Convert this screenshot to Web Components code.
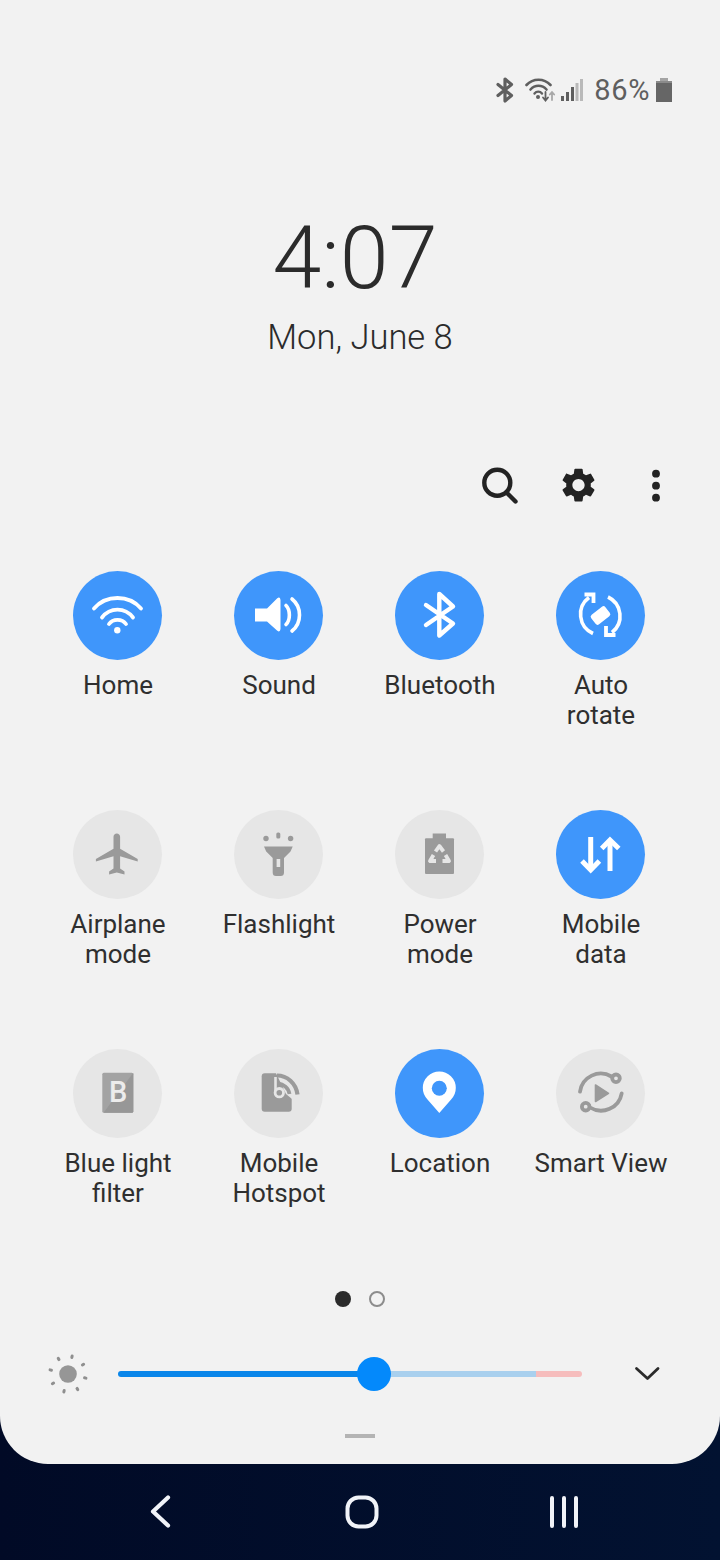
<!DOCTYPE html>
<html>
<head>
<meta charset="utf-8">
<title>Quick panel</title>
<style>
  html, body { margin: 0; padding: 0; }
  body {
    width: 720px;
    height: 1560px;
    overflow: hidden;
    background: linear-gradient(90deg, #010a26, #021231);
    font-family: Roboto, "Liberation Sans", sans-serif;
  }
</style>
</head>
<body>
<quick-panel>
  <status-bar></status-bar>
  <clock-block time="4:07" date="Mon, June 8"></clock-block>
  <panel-toolbar></panel-toolbar>
  <tile-grid>
    <qs-tile on>
      <svg slot="icon" viewBox="0 0 89 89" fill="none" stroke="currentColor" stroke-linecap="round" stroke-width="3.8">
        <path d="M21 37.5 C33 23.5 56 23.5 68 37.5"/>
        <path d="M29 46.5 C37 36 52 36 60 46.5"/>
        <path d="M36 53 C40 47.5 49 47.5 53 53"/>
        <circle cx="44.3" cy="59.2" r="3.2" fill="currentColor" stroke="none"/>
      </svg>
      Home
    </qs-tile>
    <qs-tile on>
      <svg slot="icon" viewBox="0 0 89 89" fill="none" stroke="currentColor" stroke-linecap="round" stroke-width="3.6">
        <path d="M21 37.5 H33 L43 27.5 Q46 25 46.5 29 V58 Q46 62 43 59.5 L33 50.5 H21 Z" fill="currentColor" stroke="none"/>
        <path d="M52 34.5 C56.5 39 56.5 49 52 53.5"/>
        <path d="M58 28 C68 36 68 52 58 60"/>
      </svg>
      Sound
    </qs-tile>
    <qs-tile on>
      <svg slot="icon" viewBox="0 0 89 89" fill="none" stroke="currentColor" stroke-linecap="round" stroke-linejoin="round" stroke-width="4.4">
        <path d="M31 34 L58 52.5 L44.3 64.5 V23 L58 35.5 L31 54"/>
      </svg>
      Bluetooth
    </qs-tile>
    <qs-tile on>
      <svg slot="icon" viewBox="0 0 89 89" fill="none" stroke="currentColor" stroke-width="3.6">
        <path d="M37 62.5 A21 21 0 0 1 33 26.5"/>
        <path d="M52 26 A21 21 0 0 1 56 61.5"/>
        <path d="M28.5 23.5 H37.5 V32" stroke-width="3.8"/>
        <path d="M59.5 64 H50 V55" stroke-width="3.8"/>
        <rect x="35.5" y="38.5" width="18" height="12" rx="2.5" transform="rotate(-38 44.5 44.5)" fill="currentColor" stroke="none"/>
      </svg>
      Auto<br>rotate
    </qs-tile>

    <qs-tile>
      <svg slot="icon" viewBox="0 0 89 89" fill="currentColor">
        <path transform="translate(18.5 19.5) scale(2.2 2.05)" d="M21 15.6v-1.2l-8-5V3.5c0-.83-.67-1.5-1.5-1.5S10 2.67 10 3.5v5.9l-8 5v1.2l8-2.5V19l-2 1.5V22l3.5-1 3.5 1v-1.5L13 19v-5.9z"/>
      </svg>
      Airplane<br>mode
    </qs-tile>
    <qs-tile>
      <svg slot="icon" viewBox="0 0 89 89" fill="currentColor">
        <path d="M30 36.5 H58.7 L56.5 41.5 L50 48 V62.5 Q50 66 46.5 66 H42 Q38.7 66 38.7 62.5 V48 L32.2 41.5 Z"/>
        <rect x="42.6" y="49" width="3.6" height="8" fill="#e6e6e6"/>
        <circle cx="32" cy="28.5" r="2.7"/>
        <rect x="42.3" y="22.5" width="4" height="6" rx="1.6"/>
        <circle cx="56.6" cy="28.5" r="2.7"/>
      </svg>
      Flashlight
    </qs-tile>
    <qs-tile>
      <svg slot="icon" viewBox="0 0 89 89" fill="currentColor">
        <rect x="37.7" y="23.5" width="13.3" height="6"/>
        <rect x="30" y="28.3" width="29" height="35.7" rx="1"/>
        <g fill="none" stroke="#e6e6e6" stroke-width="3.8" stroke-linejoin="round">
          <path d="M40.5 41.5 L44.4 36 L48.5 41.5"/>
          <path d="M38.5 45 L35 51 H41"/>
          <path d="M50.5 45 L54 51 H47.5"/>
        </g>
      </svg>
      Power<br>mode
    </qs-tile>
    <qs-tile on>
      <svg slot="icon" viewBox="0 0 89 89" fill="none" stroke="currentColor" stroke-width="5" stroke-linejoin="miter">
        <path d="M34.7 27 V58"/>
        <path d="M26 51 L34.7 60 L43.4 51"/>
        <path d="M54 31 V61"/>
        <path d="M45.7 38.5 L54 30 L62.8 38.5"/>
      </svg>
      Mobile<br>data
    </qs-tile>

    <qs-tile>
      <svg slot="icon" viewBox="0 0 89 89" fill="currentColor">
        <rect x="29.3" y="23.7" width="31" height="40" rx="1.5" fill="#a3a3a3"/>
        <path d="M60.3 23.7 V62.2 Q60.3 63.7 58.8 63.7 H30.5 Z" fill="#979797"/>
        <text x="45.2" y="53" text-anchor="middle" font-family="Roboto, sans-serif" font-weight="500" font-size="29" fill="#ececec">B</text>
      </svg>
      Blue light<br>filter
    </qs-tile>
    <qs-tile>
      <svg slot="icon" viewBox="0 0 89 89" fill="none">
        <rect x="27.7" y="24.3" width="30" height="38.4" rx="3" fill="currentColor"/>
        <path d="M40 20 H70 V50 H58 L52 45 Z" fill="#e6e6e6"/>
        <path d="M43 26.5 C53 26.5 62 34 63.5 45.5" stroke="currentColor" stroke-width="4.2"/>
        <path d="M44 34.5 C49.5 35 54.5 39 55.5 45" stroke="currentColor" stroke-width="3.8"/>
        <path d="M41.5 28 V43" stroke="#e6e6e6" stroke-width="2.6"/>
        <circle cx="45.3" cy="43.7" r="4.2" fill="currentColor" stroke="#e6e6e6" stroke-width="2.8"/>
      </svg>
      Mobile<br>Hotspot
    </qs-tile>
    <qs-tile on>
      <svg slot="icon" viewBox="0 0 89 89" fill="currentColor">
        <path d="M44.3 64 L32.5 50.5 A16.5 16.5 0 1 1 56.1 50.5 Z"/>
        <circle cx="44.3" cy="39.3" r="7.5" style="fill:var(--tile-bg)"/>
      </svg>
      Location
    </qs-tile>
    <qs-tile>
      <svg slot="icon" viewBox="0 0 89 89" fill="none" stroke="currentColor" stroke-width="3.8" stroke-linecap="round" stroke-linejoin="round">
        <path d="M24 42.7 A21 21 0 0 1 55.5 27.5"/>
        <circle cx="60" cy="29.3" r="3.8"/>
        <path d="M65.7 44.3 A21 21 0 0 1 34 58.5"/>
        <circle cx="29.7" cy="57.7" r="3.8"/>
        <path d="M39.5 36 V52.5 L52.5 44.3 Z" fill="currentColor" stroke-width="1.6"/>
      </svg>
      Smart View
    </qs-tile>
  </tile-grid>
  <page-dots></page-dots>
  <brightness-bar></brightness-bar>
  <panel-handle></panel-handle>
</quick-panel>
<nav-bar></nav-bar>

<script>
// quick panel pieces

class QuickPanel extends HTMLElement {
  constructor() {
    super();
    this.attachShadow({ mode: 'open' });
    this.shadowRoot.innerHTML = `
      <style>
        :host {
          display: flex;
          flex-direction: column;
          height: 1464px;
          background: #f2f2f2;
          border-radius: 0 0 48px 48px;
          color: #2b2b2b;
        }
      </style>
      <slot></slot>
    `;
  }
}

class StatusBar extends HTMLElement {
  constructor() {
    super();
    this.attachShadow({ mode: 'open' });
    this.shadowRoot.innerHTML = `
      <style>
        :host {
          display: flex;
          justify-content: flex-end;
          align-items: center;
          height: 32px;
          margin-top: 74px;
          padding-right: 48px;
          color: #5f5f5f;
        }
        svg { display: block; flex: none; }
        .pct {
          font-size: 29px;
          font-weight: 400;
          letter-spacing: 0.6px;
          line-height: 32px;
          margin: 0 6px 0 11px;
        }
      </style>
      <svg width="18" height="26" viewBox="0 0 18 26" fill="none" stroke="currentColor" stroke-width="3.2" stroke-linejoin="round" stroke-linecap="round">
        <path d="M2 7.5 L15.5 18.5 L9 24 V2 L15.5 7.5 L2 18.5"/>
      </svg>
      <svg style="margin-left:11px" width="31" height="26" viewBox="0 0 31 26" fill="none" stroke="currentColor" stroke-linecap="round">
        <path d="M1.5 8 C8 1 19 1 25.5 8" stroke-width="2.6"/>
        <path d="M5.5 12.5 C10 7.5 17 7.5 21.5 12.5" stroke-width="2.6"/>
        <path d="M9.5 16.5 C11.5 14 15 14 17 16.5" stroke-width="2.4"/>
        <circle cx="13" cy="20" r="2" fill="currentColor" stroke="none"/>
        <path d="M20.5 15 V23 M18 20.5 L20.5 23.5 L23 20.5" stroke-width="1.8"/>
        <path d="M27 23 V15 M24.8 17.5 L27 15 L29.2 17.5" stroke="#a8a8a8" stroke-width="1.8"/>
      </svg>
      <svg style="margin-left:5px" width="22" height="24" viewBox="0 0 22 24">
        <rect x="0" y="18" width="3" height="5" fill="#5f5f5f"/>
        <rect x="5" y="14" width="3" height="9" fill="#5f5f5f"/>
        <rect x="10" y="9" width="3" height="14" fill="#5f5f5f"/>
        <rect x="14.5" y="5" width="3" height="18" fill="#b9b9b9"/>
        <rect x="19" y="1" width="3" height="22" fill="#b9b9b9"/>
      </svg>
      <span class="pct">86%</span>
      <svg width="16" height="24" viewBox="0 0 16 24">
        <rect x="4" y="0" width="8" height="4" fill="#a4a4a4"/>
        <rect x="0" y="3" width="16" height="3" fill="#8a8a8a"/>
        <rect x="0" y="5" width="16" height="19" fill="#666"/>
      </svg>
    `;
  }
}

class ClockBlock extends HTMLElement {
  constructor() {
    super();
    this.attachShadow({ mode: 'open' });
  }

  connectedCallback() {
    this.shadowRoot.innerHTML = `
      <style>
        :host {
          display: flex;
          flex-direction: column;
          align-items: center;
          margin-top: 102px;
          color: #2b2b2b;
          font-weight: 300;
        }
        .time {
          height: 100px;
          margin-right: 10px;
          font-size: 88px;
          line-height: 100px;
        }
        .date {
          height: 40px;
          margin-top: 9px;
          font-size: 34.5px;
          line-height: 40px;
        }
      </style>
      <div class="time">${this.getAttribute('time')}</div>
      <div class="date">${this.getAttribute('date')}</div>
    `;
  }
}

class PanelToolbar extends HTMLElement {
  constructor() {
    super();
    this.attachShadow({ mode: 'open' });
    this.shadowRoot.innerHTML = `
      <style>
        :host {
          display: flex;
          justify-content: flex-end;
          align-items: center;
          height: 44px;
          margin-top: 106px;
          padding-right: 54px;
          color: #232323;
        }
        svg { display: block; flex: none; }
      </style>
      <svg width="44" height="44" viewBox="0 0 44 44" fill="none" stroke="currentColor" stroke-width="4.4" stroke-linecap="round">
        <circle cx="20.3" cy="19.7" r="13"/>
        <path d="M30 30 L38.5 38.5"/>
      </svg>
      <svg style="margin-left:37px" width="41" height="44" viewBox="0 0 24 25.75" fill="currentColor">
        <path transform="translate(0 .9)" d="M19.14 12.94c.04-.3.06-.61.06-.94 0-.32-.02-.64-.07-.94l2.03-1.58a.49.49 0 0 0 .12-.61l-1.92-3.32a.488.488 0 0 0-.59-.22l-2.39.96c-.5-.38-1.03-.7-1.62-.94l-.36-2.54a.484.484 0 0 0-.48-.41h-3.84c-.24 0-.43.17-.47.41l-.36 2.54c-.59.24-1.13.57-1.62.94l-2.39-.96c-.22-.08-.47 0-.59.22L2.74 8.87c-.12.21-.08.47.12.61l2.03 1.58c-.05.3-.09.63-.09.94s.02.64.07.94l-2.03 1.58a.49.49 0 0 0-.12.61l1.92 3.32c.12.22.37.29.59.22l2.39-.96c.5.38 1.03.7 1.62.94l.36 2.54c.05.24.24.41.48.41h3.84c.24 0 .44-.17.47-.41l.36-2.54c.59-.24 1.13-.56 1.62-.94l2.39.96c.22.08.47 0 .59-.22l1.92-3.32c.12-.22.07-.47-.12-.61l-2.01-1.58zM12 15.6c-1.98 0-3.6-1.62-3.6-3.6s1.62-3.6 3.6-3.6 3.6 1.62 3.6 3.6-1.62 3.6-3.6 3.6z"/>
      </svg>
      <svg style="margin-left:47px" width="20" height="44" viewBox="0 0 20 44" fill="currentColor">
        <circle cx="10" cy="10.7" r="3.9"/>
        <circle cx="10" cy="22.7" r="3.9"/>
        <circle cx="10" cy="34.7" r="3.9"/>
      </svg>
    `;
  }
}

class TileGrid extends HTMLElement {
  constructor() {
    super();
    this.attachShadow({ mode: 'open' });
    this.shadowRoot.innerHTML = `
      <style>
        :host {
          display: grid;
          grid-template-columns: repeat(4, 161px);
          grid-auto-rows: 239px;
          margin-top: 64px;
          padding-left: 37px;
        }
      </style>
      <slot></slot>
    `;
  }
}

class QsTile extends HTMLElement {
  constructor() {
    super();
    this.attachShadow({ mode: 'open' });
    this.shadowRoot.innerHTML = `
      <style>
        :host {
          --tile-bg: #e6e6e6;
          --tile-fg: #9a9a9a;
          display: flex;
          flex-direction: column;
          align-items: center;
          font-size: 26px;
          line-height: 30px;
          color: #2f2f2f;
          text-align: center;
        }
        :host([on]) {
          --tile-bg: #3f96fb;
          --tile-fg: #fff;
        }
        .circle {
          width: 89px;
          height: 89px;
          flex: none;
          border-radius: 50%;
          background: var(--tile-bg);
          color: var(--tile-fg);
        }
        ::slotted(svg) {
          display: block;
          width: 89px;
          height: 89px;
        }
        .label {
          margin-top: 10px;
          margin-left: 1px;
          white-space: nowrap;
        }
      </style>
      <div class="circle"><slot name="icon"></slot></div>
      <div class="label"><slot></slot></div>
    `;
  }
}

class PageDots extends HTMLElement {
  constructor() {
    super();
    this.attachShadow({ mode: 'open' });
    this.shadowRoot.innerHTML = `
      <style>
        :host {
          display: flex;
          justify-content: center;
          align-items: center;
          gap: 18px;
          height: 20px;
          margin-top: 1px;
        }
        .dot {
          box-sizing: border-box;
          width: 16px;
          height: 16px;
          border-radius: 50%;
          background: #2b2b2b;
        }
        .dot.off {
          background: none;
          border: 2.5px solid #8c8c8c;
        }
      </style>
      <div class="dot"></div>
      <div class="dot off"></div>
    `;
  }
}

class BrightnessBar extends HTMLElement {
  constructor() {
    super();
    this.attachShadow({ mode: 'open' });
    this.shadowRoot.innerHTML = `
      <style>
        :host {
          display: flex;
          align-items: center;
          height: 44px;
          margin-top: 43px;
          padding-left: 48px;
        }
        svg { display: block; flex: none; }
        .slider {
          position: relative;
          display: flex;
          width: 464px;
          height: 6px;
          margin-left: 30px;
        }
        .done { width: 256px; background: #0a86ea; border-radius: 3px 0 0 3px; }
        .rest { width: 162px; background: #a9d0ee; }
        .hot { width: 46px; background: #f6bdbd; border-radius: 0 3px 3px 0; }
        .thumb {
          position: absolute;
          left: 239px;
          top: -14px;
          width: 34px;
          height: 34px;
          border-radius: 50%;
          background: #0489fb;
        }
      </style>
      <svg width="40" height="44" viewBox="-20 -22 40 44" fill="#969696">
        <circle r="8.8"/>
        <g stroke="#8f8f8f" stroke-width="3" stroke-linecap="round">
          <path transform="rotate(13)" d="M0 -18.4 V-17"/>
          <path transform="rotate(58)" d="M0 -18.4 V-17"/>
          <path transform="rotate(103)" d="M0 -18.4 V-17"/>
          <path transform="rotate(148)" d="M0 -18.4 V-17"/>
          <path transform="rotate(193)" d="M0 -18.4 V-17"/>
          <path transform="rotate(238)" d="M0 -18.4 V-17"/>
          <path transform="rotate(283)" d="M0 -18.4 V-17"/>
          <path transform="rotate(328)" d="M0 -18.4 V-17"/>
        </g>
      </svg>
      <div class="slider">
        <div class="done"></div>
        <div class="rest"></div>
        <div class="hot"></div>
        <div class="thumb"></div>
      </div>
      <svg style="margin-left:50px" width="30" height="44" viewBox="0 0 30 44" fill="none" stroke="#2b2b2b" stroke-width="2.8" stroke-linecap="round" stroke-linejoin="round">
        <path d="M4.5 16.5 L15.5 26.5 L26 16.5"/>
      </svg>
    `;
  }
}

class PanelHandle extends HTMLElement {
  constructor() {
    super();
    this.attachShadow({ mode: 'open' });
    this.shadowRoot.innerHTML = `
      <style>
        :host {
          display: block;
          width: 30px;
          height: 4px;
          margin: 38px auto 0;
          background: #b4b4b4;
        }
      </style>
    `;
  }
}

class NavBar extends HTMLElement {
  constructor() {
    super();
    this.attachShadow({ mode: 'open' });
    this.shadowRoot.innerHTML = `
      <style>
        :host {
          display: flex;
          justify-content: center;
          align-items: center;
          height: 96px;
          padding-left: 4px;
          color: #f1f3f8;
        }
        svg { display: block; flex: none; }
        svg + svg { margin-left: 162px; }
      </style>
      <svg width="40" height="40" viewBox="0 0 40 40" fill="none" stroke="currentColor" stroke-width="4.2" stroke-linecap="round" stroke-linejoin="round">
        <path d="M28 5.5 L13 19.5 L28 33.5"/>
      </svg>
      <svg width="40" height="40" viewBox="0 0 40 40" fill="none" stroke="currentColor" stroke-width="4">
        <rect x="5.5" y="5.5" width="29" height="29" rx="11"/>
      </svg>
      <svg width="40" height="40" viewBox="0 0 40 40" fill="none" stroke="currentColor" stroke-width="4" stroke-linecap="round">
        <path d="M8 6 V34 M20 6 V34 M32 6 V34"/>
      </svg>
    `;
  }
}

customElements.define('quick-panel', QuickPanel);
customElements.define('status-bar', StatusBar);
customElements.define('clock-block', ClockBlock);
customElements.define('panel-toolbar', PanelToolbar);
customElements.define('tile-grid', TileGrid);
customElements.define('qs-tile', QsTile);
customElements.define('page-dots', PageDots);
customElements.define('brightness-bar', BrightnessBar);
customElements.define('panel-handle', PanelHandle);
customElements.define('nav-bar', NavBar);
</script>
</body>
</html>
